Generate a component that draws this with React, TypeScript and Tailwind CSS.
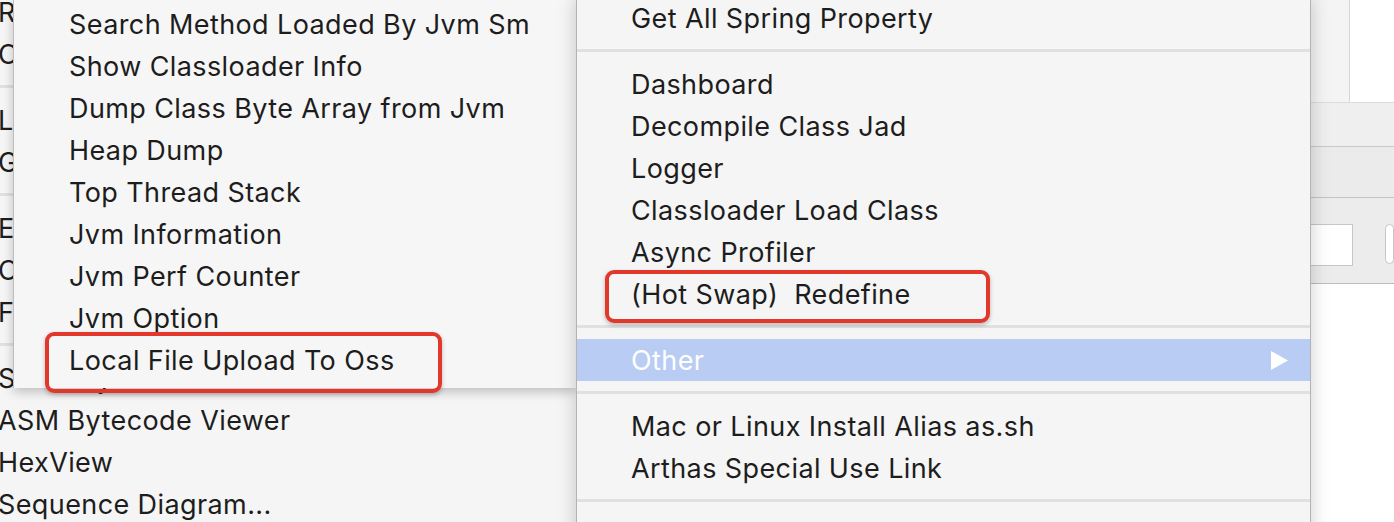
import React from "react";

type Item = { label: string; active?: boolean } | { sep: true };

const font = { fontFamily: "Inter, 'Liberation Sans', sans-serif" };

const backItems: Item[] = [
  { label: "Refactor" },
  { label: "Optimize Imports" },
  { sep: true },
  { label: "Local History" },
  { label: "Git" },
  { sep: true },
  { label: "External Tools" },
  { label: "Compare with Clipboard" },
  { label: "File Encoding" },
  { sep: true },
  { label: "Show Bytecode With Jclasslib" },
  { label: "ASM Bytecode Viewer" },
  { label: "HexView" },
  { label: "Sequence Diagram..." },
];

const subItems = [
  "Search Method Loaded By Jvm Sm",
  "Show Classloader Info",
  "Dump Class Byte Array from Jvm",
  "Heap Dump",
  "Top Thread Stack",
  "Jvm Information",
  "Jvm Perf Counter",
  "Jvm Option",
  "Local File Upload To Oss",
];

const mainItems: Item[] = [
  { label: "Get All Spring Property" },
  { sep: true },
  { label: "Dashboard" },
  { label: "Decompile Class Jad" },
  { label: "Logger" },
  { label: "Classloader Load Class" },
  { label: "Async Profiler" },
  { label: "(Hot Swap)\u00a0 Redefine" },
  { sep: true },
  { label: "Other", active: true },
  { sep: true },
  { label: "Mac or Linux Install Alias as.sh" },
  { label: "Arthas Special Use Link" },
  { sep: true },
  { label: "" },
];

function Separator() {
  return (
    <div className="pt-[10px] pb-[11px]">
      <div className="h-[3px] bg-[#e0e0e0]" />
    </div>
  );
}

function Row({ label, active, pad }: { label: string; active?: boolean; pad: string }) {
  return (
    <div
      className={`h-[42px] flex items-center justify-between whitespace-nowrap ${pad} ${
        active ? "bg-[#b9ccf3] text-white" : "text-[#1d1d1d]"
      }`}
    >
      <span>{label}</span>
      {active && (
        <svg width="17" height="19" viewBox="0 0 17 19" className="mr-[22px]">
          <polygon points="0,0 17,9.5 0,19" fill="#ffffff" />
        </svg>
      )}
    </div>
  );
}

function Menu({ items, pad }: { items: Item[]; pad: string }) {
  return (
    <>
      {items.map((it, i) =>
        "sep" in it ? (
          <Separator key={i} />
        ) : (
          <Row key={i} label={it.label} active={it.active} pad={pad} />
        )
      )}
    </>
  );
}

export default function App() {
  return (
    <div
      className="relative w-[1394px] h-[522px] overflow-hidden bg-white text-[27px] tracking-[0.4px] leading-none"
      style={font}
    >
      {/* window behind, on the right */}
      <div className="absolute top-0 right-0 w-[84px] h-full flex flex-col">
        <div className="h-[102px] flex">
          <div className="w-[39px] bg-[#f4f4f4]" />
          <div className="w-px bg-[#d6d6d6]" />
          <div className="flex-1 bg-white" />
        </div>
        <div className="h-[44px] bg-[#efefef] border-t border-[#dcdcdc]" />
        <div className="h-[51px] bg-[#ebebeb] border-t border-[#c8c8c8]" />
        <div className="h-[87px] bg-[#ececec] border-t border-b border-[#c4c4c4] border-b-[#bcbcbc] flex items-start pt-[26px] gap-[32px]">
          <div className="w-[49px] h-[42px] bg-white border border-[#c6c6c6]" />
          <div className="w-[10px] h-[40px] bg-white border border-[#c6c6c6] rounded-[5px]" />
        </div>
        <div className="flex-1 bg-white" />
      </div>

      {/* editor popup, far back */}
      <div className="absolute left-[-40px] top-[-9px] w-[640px] bg-[#f5f5f5]">
        <Menu items={backItems} pad="pl-[38px]" />
      </div>

      {/* Other submenu */}
      <div className="absolute left-[13px] top-0 w-[563px] pt-[3px] pb-[7px] bg-[#f6f6f6] border-l border-[#bdbdbd] shadow-[0_4px_10px_rgba(0,0,0,0.22)]">
        {subItems.map((s, i) => (
          <Row key={i} label={s} pad="pl-[55px]" />
        ))}
      </div>

      {/* Arthas menu */}
      <div className="absolute left-[576px] top-[-3px] w-[735px] bg-[#f5f5f5] border-l border-r border-[#b4b4b4] shadow-[0_0_18px_rgba(0,0,0,0.2)]">
        <Menu items={mainItems} pad="pl-[54px]" />
      </div>

      {/* red annotations */}
      <div className="absolute left-[45px] top-[332px] w-[397px] h-[61px] border-[4px] border-[#e2382b] rounded-[9px] shadow-[0_2px_4px_rgba(0,0,0,0.25)]" />
      <div className="absolute left-[605px] top-[270px] w-[385px] h-[53px] border-[4px] border-[#e2382b] rounded-[9px] shadow-[0_2px_4px_rgba(0,0,0,0.25)]" />
    </div>
  );
}
